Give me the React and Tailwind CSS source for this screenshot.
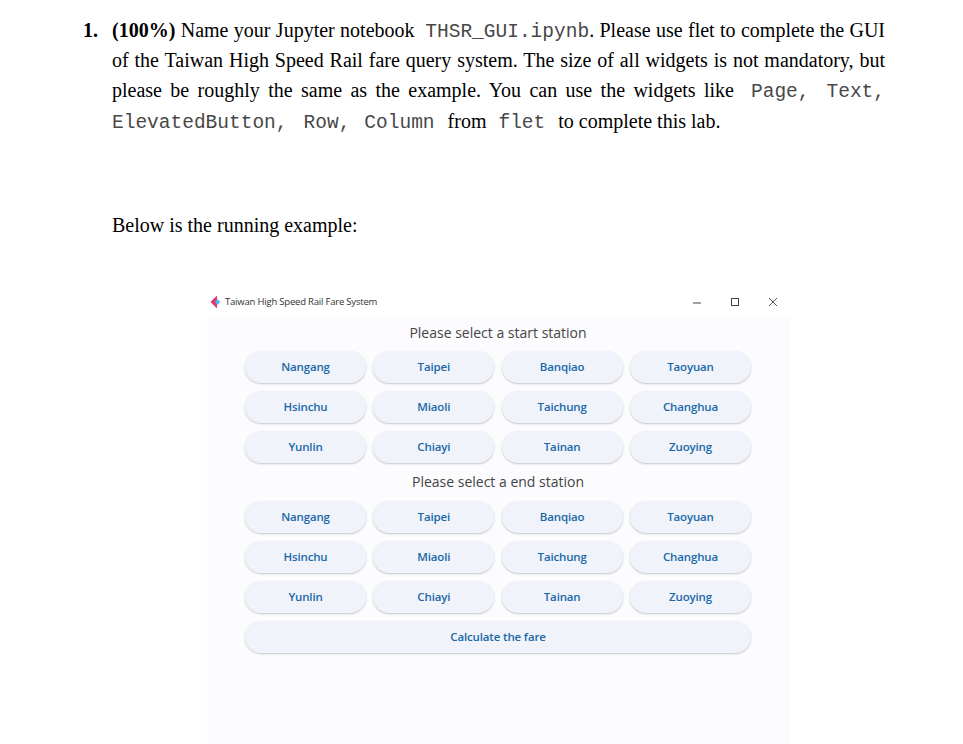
const stations = [
  ["Nangang", "Taipei", "Banqiao", "Taoyuan"],
  ["Hsinchu", "Miaoli", "Taichung", "Changhua"],
  ["Yunlin", "Chiayi", "Tainan", "Zuoying"],
];

function Code({ children }) {
  return <span className="font-['Liberation_Mono',monospace] text-[19.5px] leading-none text-[#484848]">{children}</span>;
}

function FareButton({ label, wide }) {
  return (
    <button
      className={`h-[32px] ${wide ? "w-full" : "w-[121px]"} rounded-full bg-[#f0f3fa] text-[11.5px] font-semibold tracking-[-0.15px] text-[#1a68a8] shadow-[0_1px_2px_rgba(0,0,0,0.22)]`}
    >
      {label}
    </button>
  );
}

function StationGrid() {
  return (
    <div className="flex flex-col gap-[8px]">
      {stations.map((row, i) => (
        <div key={i} className="flex justify-between">
          {row.map((name) => (
            <FareButton key={name} label={name} />
          ))}
        </div>
      ))}
    </div>
  );
}

function App() {
  return (
    <div className="h-[744px] w-[963px] overflow-hidden bg-white font-['Liberation_Serif',serif] text-[20px] text-black">
      {/* Question text */}
      <div className="flex pl-[83px] pr-[78px] pt-[15px]">
        <b className="w-[29px] leading-[30.2px]">1.</b>
        <div className="flex-1 leading-[30.2px]">
          <div className="[text-align-last:justify]">
            <b>(100%)</b> Name your Jupyter notebook&nbsp; <Code>THSR_GUI.ipynb</Code>. Please use flet to complete the GUI
          </div>
          <div className="[text-align-last:justify]">
            of the Taiwan High Speed Rail fare query system. The size of all widgets is not mandatory, but
          </div>
          <div className="flex items-baseline justify-between">
            <span className="w-[622px] [text-align-last:justify]">
              please be roughly the same as the example. You can use the widgets like
            </span>
            <Code>Page,</Code>
            <Code>Text,</Code>
          </div>
          <div className="flex items-baseline">
            <Code>ElevatedButton,</Code>
            <span className="ml-[16px]"><Code>Row,</Code></span>
            <span className="ml-[14px]"><Code>Column</Code></span>
            <span className="ml-[13px]">from</span>
            <span className="ml-[12px]"><Code>flet</Code></span>
            <span className="ml-[13px]">to complete this lab.</span>
          </div>
        </div>
      </div>

      <p className="pl-[112px] pt-[74px] leading-[30px]">Below is the running example:</p>

      {/* Running example window */}
      <div className="ml-[207px] mt-[48px] w-[583px] font-['Open_Sans',sans-serif]">
        <div className="flex h-[28px] items-center justify-between">
          <div className="flex items-center gap-[4px] pl-[3px]">
            <svg width="11" height="14" viewBox="0 0 11 14">
              <path d="M7 0.5 L0.5 7 L7 13.5 Z" fill="#e8336f" />
              <path d="M7 4 L10.5 7 L7 10 L5 7 Z" fill="#4cb8ea" />
            </svg>
            <span className="text-[9.5px] tracking-[-0.2px] text-[#333]">Taiwan High Speed Rail Fare System</span>
          </div>
          <div className="flex items-center gap-[28px] pr-[12px] text-[#444]">
            <svg width="10" height="10" viewBox="0 0 10 10">
              <path d="M1 6 H9" stroke="currentColor" strokeWidth="1" />
            </svg>
            <svg width="10" height="10" viewBox="0 0 10 10">
              <rect x="1.5" y="1.5" width="7" height="7" fill="none" stroke="currentColor" strokeWidth="1" />
            </svg>
            <svg width="10" height="10" viewBox="0 0 10 10">
              <path d="M1 1 L9 9 M9 1 L1 9" stroke="currentColor" strokeWidth="0.9" />
            </svg>
          </div>
        </div>

        <div className="h-[428px] bg-[#fcfcfe] pl-[38px] pr-[39px]">
          <div className="flex flex-col gap-[8px]">
            <p className="h-[27px] pt-[7px] text-center text-[14px] leading-[20px] text-[#444]">Please select a start station</p>
            <StationGrid />
            <p className="h-[22px] pt-[1px] text-center text-[14px] leading-[20px] text-[#444]">Please select a end station</p>
            <StationGrid />
            <FareButton label="Calculate the fare" wide />
          </div>
        </div>
      </div>
    </div>
  );
}

export default App;
